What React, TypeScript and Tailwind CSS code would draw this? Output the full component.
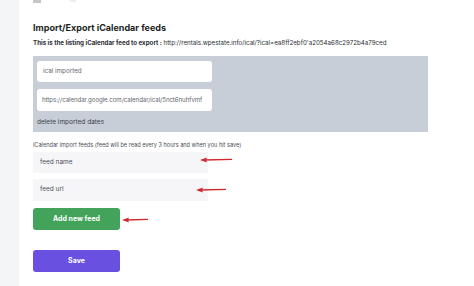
import React from 'react';

const Arrow: React.FC<{ className: string; width: number }> = ({ className, width }) => (
  <svg className={`absolute ${className}`} width={width} height="8" viewBox={`0 0 ${width} 8`}>
    <line x1="4" y1="4" x2={width} y2="3.3" stroke="#d0262c" strokeWidth="1.3" />
    <path d="M0 4 L7 1.6 L6 4 L7 6.4 Z" fill="#d0262c" />
  </svg>
);

const App: React.FC = () => {
  return (
    <div className="flex min-h-screen bg-white font-['Inter',sans-serif] text-[#1f2328]">
      <aside className="w-[19px] shrink-0 bg-[#f4f5f7]" />

      <main className="relative flex-1 pl-[14px] pr-[46px]">
        <div className="flex gap-[29px]">
          <div className="h-[3px] w-[8px] bg-[#c4c6ca]" />
          <div className="h-[2px] w-[6px] bg-[#eceef0]" />
        </div>

        <h2 className="mt-[19px] text-[9px] font-bold leading-[11px] text-[#1c1f24]">
          Import/Export iCalendar feeds
        </h2>

        <p className="mt-[6px] whitespace-nowrap text-[6.2px] leading-[8px] text-[#2a2d33]">
          <span className="font-bold">This is the listing iCalendar feed to export :</span>{' '}
          http://rentals.wpestate.info/ical/?ical=ea8ff2ebf0'a2054a68c2972b4a79ced
        </p>

        <section className="mt-[9px] flex flex-col bg-[#c7ced8] px-[4px] pt-[5px] pb-[5px]">
          <div className="flex h-[21px] w-[175px] items-center rounded-[3px] bg-white px-[6px] text-[6.3px] text-[#62666e]">
            ical imported
          </div>
          <div className="mt-[7px] flex h-[22px] w-[175px] items-center whitespace-nowrap rounded-[3px] bg-white px-[5px] text-[6.1px] tracking-[-0.05px] text-[#62666e]">
            https://calendar.google.com/calendar/ical/5nct6nuhfvmf
          </div>
          <div className="mt-[6px] text-[6.5px] leading-[10px] text-[#3a3e46]">delete imported dates</div>
        </section>

        <p className="mt-[9px] whitespace-nowrap text-[5.6px] leading-[8px] text-[#4a4e56]">
          iCalendar import feeds (feed will be read every 3 hours and when you hit save)
        </p>

        <div className="mt-[3px] flex h-[21px] w-[175px] items-center bg-[#f6f6f9] px-[7px] text-[6.5px] text-[#4a4e56]">
          feed name
        </div>
        <div className="mt-[6px] flex h-[22px] w-[175px] items-center bg-[#f6f6f9] px-[7px] text-[6.5px] text-[#4a4e56]">
          feed url
        </div>

        <button className="mt-[7px] flex h-[22px] w-[87px] items-center justify-center rounded-[3px] bg-[#43a35b] text-[7px] font-bold text-white">
          Add new feed
        </button>

        <button className="mt-[20px] flex h-[22px] w-[87px] items-center justify-center rounded-[3px] bg-[#6a50e0] text-[7px] font-bold text-white">
          Save
        </button>

        <Arrow className="left-[181px] top-[156px]" width={32} />
        <Arrow className="left-[177px] top-[186px]" width={30} />
        <Arrow className="left-[103px] top-[216px]" width={26} />
      </main>
    </div>
  );
};

export default App;
